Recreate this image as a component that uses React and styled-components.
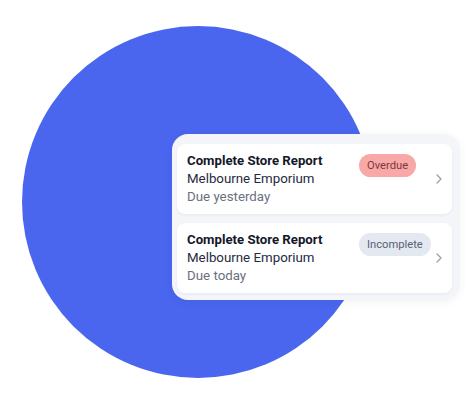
import React from "react";
import styled, { createGlobalStyle } from "styled-components";

const Global = createGlobalStyle`
  html, body { margin: 0; padding: 0; background: #ffffff; }
  body { font-family: Roboto, "Noto Sans", Arial, sans-serif; -webkit-font-smoothing: antialiased; }
`;

const Stage = styled.div`
  position: relative;
  width: 474px;
  height: 404px;
  overflow: hidden;
  background: #ffffff;
`;

const Circle = styled.div`
  position: absolute;
  left: 22px;
  top: 26px;
  width: 352px;
  height: 352px;
  border-radius: 50%;
  background: #4a66ee;
`;

const Panel = styled.div`
  position: absolute;
  left: 172px;
  top: 134px;
  width: 288px;
  box-sizing: border-box;
  padding: 10px 8px 7px 5px;
  display: flex;
  flex-direction: column;
  gap: 9px;
  background: #f4f5f9;
  border-radius: 16px;
  box-shadow: 0 2px 10px rgba(40, 50, 90, 0.06);
`;

const Card = styled.div`
  height: 70px;
  box-sizing: border-box;
  padding: 8px 9px 8px 10px;
  display: grid;
  grid-template-columns: 172px 1fr 10px;
  align-items: center;
  background: #ffffff;
  border-radius: 8px;
  box-shadow: 0 1px 3px rgba(30, 40, 80, 0.06);
`;

const Info = styled.div`
  display: flex;
  flex-direction: column;
  align-self: center;
`;

const Line = styled.div`
  font-size: ${(p) => p.$size || 13.3}px;
  line-height: 18px;
  font-weight: ${(p) => p.$weight || 400};
  color: ${(p) => p.$color};
  white-space: nowrap;
`;

const BadgeCell = styled.div`
  align-self: start;
  padding-top: 2px;
  display: flex;
`;

const Badge = styled.span`
  display: inline-flex;
  align-items: center;
  height: 23px;
  padding: 0 8px;
  border-radius: 12px;
  font-size: 11.2px;
  color: ${(p) => p.$fg};
  background: ${(p) => p.$bg};
`;

const Chevron = styled.svg`
  width: 8px;
  height: 12px;
  justify-self: end;
`;

const items = [
  { due: "Due yesterday", badge: "Overdue", bg: "#f8a8a6", fg: "#7c3a3d" },
  { due: "Due today", badge: "Incomplete", bg: "#e3e8f1", fg: "#5b6275" },
];

export default function App() {
  return (
    <>
      <Global />
      <Stage>
        <Circle />
        <Panel>
          {items.map((it) => (
            <Card key={it.badge}>
              <Info>
                <Line $weight={700} $size={13.2} $color="#141729">Complete Store Report</Line>
                <Line $color="#262a40">Melbourne Emporium</Line>
                <Line $color="#6b7080">{it.due}</Line>
              </Info>
              <BadgeCell>
                <Badge $bg={it.bg} $fg={it.fg}>{it.badge}</Badge>
              </BadgeCell>
              <Chevron viewBox="0 0 8 12">
                <path d="M2 2l4 4-4 4" fill="none" stroke="#9ca0aa" strokeWidth="1.3" strokeLinecap="round" strokeLinejoin="round" />
              </Chevron>
            </Card>
          ))}
        </Panel>
      </Stage>
    </>
  );
}
